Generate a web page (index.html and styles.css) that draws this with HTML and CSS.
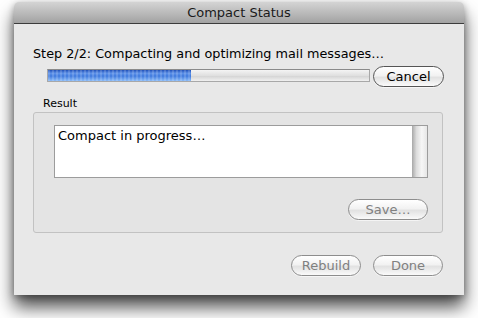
FILE: index.html
```html
<!DOCTYPE html>
<html>
<head>
<meta charset="utf-8">
<link rel="stylesheet" href="styles.css">
</head>
<body>
<div class="page">
<div class="window">
  <div class="titlebar">Compact Status</div>
  <div class="content">
    <div class="step">Step 2/2: Compacting and optimizing mail messages…</div>
    <div class="progress-row">
      <div class="progress"><div class="fill" style="width:44.5%"></div></div>
      <button class="btn btn-active cancel">Cancel</button>
    </div>
    <div class="group-label">Result</div>
    <div class="group">
      <div class="textarea">
        <div class="text">Compact in progress…</div>
        <div class="scroller"></div>
      </div>
      <div class="save-row"><button class="btn save">Save…</button></div>
    </div>
    <div class="bottom-row">
      <button class="btn rebuild">Rebuild</button>
      <button class="btn done">Done</button>
    </div>
  </div>
</div>
</div>
</body>
</html>
```
FILE: styles.css
```css
html, body {
  margin: 0;
  padding: 0;
  background: #ffffff;
}
body {
  font-family: "DejaVu Sans", "Lucida Grande", sans-serif;
  font-size: 12px;
  color: #000;
}
.page {
  width: 478px;
  height: 318px;
  padding: 2px 0 0 14px;
  box-sizing: border-box;
  overflow: hidden;
}
.window {
  width: 450px;
  height: 293px;
  background: #e8e8e8;
  border-radius: 5px 5px 0 0;
  box-shadow: 0 12px 18px rgba(0,0,0,0.7), 0 2px 7px rgba(0,0,0,0.3);
  display: flex;
  flex-direction: column;
}
.titlebar {
  height: 21px;
  border-bottom: 1px solid #3c3c3c;
  border-radius: 5px 5px 0 0;
  background: linear-gradient(#d4d4d4, #a2a2a2);
  text-align: center;
  line-height: 22px;
  font-size: 13px;
  color: #1a1a1a;
}
.content {
  flex: 1;
  padding: 22px 21px 19px 19px;
  display: flex;
  flex-direction: column;
}
.step {
  font-size: 12.8px;
  line-height: 16px;
  height: 16px;
}
.progress-row {
  display: flex;
  align-items: center;
  margin-top: 4px;
  height: 21px;
}
.progress {
  margin-left: 14px;
  width: 321px;
  height: 11px;
  margin-top: -3px;
  border: 1px solid #a8a8a8;
  border-top-color: #8a8a8a;
  background: linear-gradient(#f4f4f4, #e0e0e0 50%, #d2d2d2 51%, #f0f0f0);
}
.fill {
  height: 100%;
  background:
    repeating-linear-gradient(90deg, rgba(255,255,255,0.15) 0 2px, rgba(255,255,255,0) 2px 4px),
    linear-gradient(#1f4fb8, #5e92e8 30%, #3f7ade 55%, #8cbcf8);
}
.btn {
  font-family: "DejaVu Sans", "Lucida Grande", sans-serif;
  font-size: 13px;
  height: 21px;
  padding: 0;
  border: 1px solid #8d8d8d;
  border-radius: 11px;
  background: linear-gradient(#ffffff, #f2f2f2 45%, #e2e2e2 55%, #fafafa);
  color: #808080;
  line-height: 19px;
  box-shadow: 0 1px 0 rgba(255,255,255,0.6);
}
.btn-active {
  color: #000;
  border-color: #555;
}
.cancel {
  margin-left: auto;
  width: 71px;
  margin-right: -1px;
}
.group-label {
  margin-top: 10px;
  padding-left: 10px;
  font-size: 11px;
  line-height: 14px;
  height: 15px;
}
.group {
  border: 1px solid #c2c2c2;
  border-radius: 3px;
  background: #e4e4e4;
  padding: 12px 14px 0 20px;
  box-sizing: border-box;
  width: 410px;
  height: 121px;
  display: flex;
  flex-direction: column;
}
.textarea {
  height: 53px;
  border: 1px solid #9c9c9c;
  background: #fff;
  display: flex;
  box-sizing: border-box;
}
.text {
  flex: 1;
  padding: 2px 0 0 3px;
  font-size: 13px;
  line-height: 16px;
}
.scroller {
  width: 15px;
  background: linear-gradient(90deg, #a8a8a8, #dcdcdc 30%, #f6f6f6 65%, #e6e6e6);
}
.save-row {
  display: flex;
  justify-content: flex-end;
  margin-top: 21px;
}
.save { width: 80px; }
.bottom-row {
  display: flex;
  justify-content: flex-end;
  gap: 12px;
  margin-top: auto;
}
.rebuild { width: 70px; }
.done { width: 70px; }
```
